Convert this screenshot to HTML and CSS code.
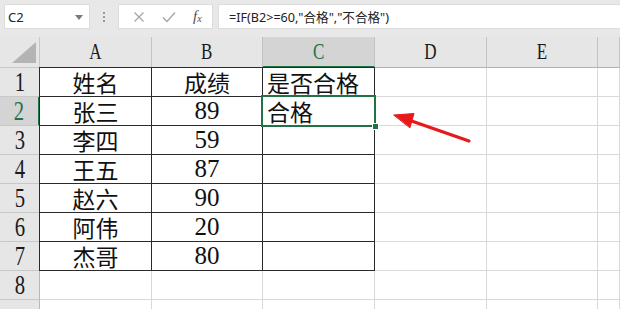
FILE: index.html
```html
<!DOCTYPE html>
<html lang="zh">
<head>
<meta charset="utf-8">
<title>Excel</title>
<link rel="stylesheet" href="styles.css">
</head>
<body>
<div class="app">
  <div class="toolbar">
    <div class="namebox">
      <span class="ref">C2</span>
      <svg class="drop" width="8" height="5" viewBox="0 0 8 5"><path d="M0 0H8L4 5Z" fill="#7a7a7a"/></svg>
    </div>
    <div class="grip"><i></i><i></i><i></i></div>
    <div class="buttons">
      <svg class="btn" width="12" height="12" viewBox="0 0 12 12"><path d="M1.5 1.5L10.5 10.5M10.5 1.5L1.5 10.5" stroke="#a6a6a6" stroke-width="1.3" fill="none"/></svg>
      <svg class="btn" width="14" height="12" viewBox="0 0 14 12"><path d="M1 6.5L5 10.5L13 1.5" stroke="#a6a6a6" stroke-width="1.4" fill="none"/></svg>
      <span class="fx">f<sub>x</sub></span>
    </div>
    <div class="formula">=IF(B2&gt;=60,"合格","不合格")</div>
  </div>
  <div class="sheet">
    <div class="corner"><svg width="24" height="21" viewBox="0 0 24 21"><path d="M24 0V21H0Z" fill="#b4b4b4"/></svg></div>
    <div class="ch"><span class="sq">A</span></div>
    <div class="ch"><span class="sq">B</span></div>
    <div class="ch act"><span class="sq">C</span></div>
    <div class="ch"><span class="sq">D</span></div>
    <div class="ch"><span class="sq">E</span></div>
    <div class="ch"></div>

    <div class="rh"><span class="sq">1</span></div>
    <div class="c t a top cen">姓名</div>
    <div class="c t top cen">成绩</div>
    <div class="c t top">是否合格</div>
    <div class="c"></div><div class="c"></div><div class="c"></div>

    <div class="rh act"><span class="sq">2</span></div>
    <div class="c t a cen">张三</div>
    <div class="c t cen num">89</div>
    <div class="c t sel">合格<span class="handle"></span></div>
    <div class="c"></div><div class="c"></div><div class="c"></div>

    <div class="rh"><span class="sq">3</span></div>
    <div class="c t a cen">李四</div>
    <div class="c t cen num">59</div>
    <div class="c t"></div>
    <div class="c"></div><div class="c"></div><div class="c"></div>

    <div class="rh"><span class="sq">4</span></div>
    <div class="c t a cen">王五</div>
    <div class="c t cen num">87</div>
    <div class="c t"></div>
    <div class="c"></div><div class="c"></div><div class="c"></div>

    <div class="rh"><span class="sq">5</span></div>
    <div class="c t a cen">赵六</div>
    <div class="c t cen num">90</div>
    <div class="c t"></div>
    <div class="c"></div><div class="c"></div><div class="c"></div>

    <div class="rh"><span class="sq">6</span></div>
    <div class="c t a cen">阿伟</div>
    <div class="c t cen num">20</div>
    <div class="c t"></div>
    <div class="c"></div><div class="c"></div><div class="c"></div>

    <div class="rh"><span class="sq">7</span></div>
    <div class="c t a cen">杰哥</div>
    <div class="c t cen num">80</div>
    <div class="c t"></div>
    <div class="c"></div><div class="c"></div><div class="c"></div>

    <div class="rh"><span class="sq">8</span></div>
    <div class="c"></div><div class="c"></div><div class="c"></div>
    <div class="c"></div><div class="c"></div><div class="c"></div>

    <div class="rh"></div>
    <div class="c"></div><div class="c"></div><div class="c"></div>
    <div class="c"></div><div class="c"></div><div class="c"></div>

    <svg class="arrow" width="90" height="40" viewBox="0 0 90 40">
      <g fill="#e8191a" stroke="#e8191a" stroke-linecap="round">
        <path d="M83 37L17 14" stroke-width="3.2" fill="none"/>
        <path d="M8 11L28 9.5L24 23.5Z" stroke-width="1"/>
      </g>
    </svg>
  </div>
</div>
</body>
</html>
```

FILE: styles.css
```css
* { box-sizing: border-box; }
html, body { margin: 0; padding: 0; }
body {
  width: 620px;
  height: 309px;
  overflow: hidden;
  background: #fff;
  font-family: "Liberation Serif", "Noto Sans CJK SC", serif;
}
.app { display: flex; flex-direction: column; height: 309px; }

.toolbar {
  height: 37px;
  flex: none;
  display: flex;
  align-items: flex-start;
  padding: 4px 0 0 4px;
  background: #e8e8e8;
  font-family: "Noto Sans", "Noto Sans CJK SC", sans-serif;
}
.namebox {
  width: 86px;
  height: 25px;
  background: #fff;
  border: 1px solid #dcdcdc;
  display: flex;
  align-items: center;
  justify-content: space-between;
  padding: 0 6px 0 3px;
  font-size: 13px;
  color: #222;
}
.drop { margin-top: 1px; }
.grip {
  width: 28px;
  height: 25px;
  display: flex;
  flex-direction: column;
  align-items: center;
  justify-content: center;
  gap: 2px;
}
.grip i { width: 2px; height: 2px; background: #9a9a9a; display: block; }
.buttons {
  width: 95px;
  height: 25px;
  background: #fff;
  border: 1px solid #dcdcdc;
  display: flex;
  align-items: center;
  justify-content: space-around;
  padding: 0 2px 0 6px;
}
.fx {
  font-family: "Liberation Serif", serif;
  font-style: italic;
  font-size: 15px;
  color: #505050;
  line-height: 1;
}
.fx sub { font-size: 10px; vertical-align: -1px; }
.formula {
  flex: 1;
  margin-left: 5px;
  height: 25px;
  background: #fff;
  border: 1px solid #dcdcdc;
  border-right: none;
  display: flex;
  align-items: center;
  padding-left: 10px;
  font-size: 12.6px;
  color: #222;
  white-space: nowrap;
}

.sheet {
  position: relative;
  flex: 1;
  display: grid;
  grid-template-columns: 40px 112px 111px 112px 112px 111px 1fr;
  grid-template-rows: 31px repeat(9, 29px);
  overflow: hidden;
}
.corner {
  background: #e6e6e6;
  border-right: 1px solid #c8c8c8;
  border-bottom: 1px solid #c8c8c8;
  display: flex;
  align-items: flex-end;
  justify-content: flex-end;
  padding: 0 3px 4px 0;
}
.ch {
  background: #e6e6e6;
  border-right: 1px solid #c3c3c3;
  border-bottom: 1px solid #b0b0b0;
  display: flex;
  align-items: center;
  justify-content: center;
  font-size: 23px;
  color: #1a1a1a;
  padding-top: 1px;
}
.ch.act {
  background: #d4d4d4;
  color: #217346;
  border-bottom: 2px solid #217346;
}
.rh {
  background: #e6e6e6;
  border-right: 1px solid #b8b8b8;
  border-bottom: 1px solid #c8c8c8;
  display: flex;
  align-items: center;
  justify-content: center;
  font-size: 28px;
  color: #1a1a1a;
}
.rh.act {
  background: #d4d4d4;
  color: #217346;
  border-right: 2px solid #217346;
}
.sq { display: inline-block; transform: scaleX(0.74); line-height: 0.9; }

.c {
  border-right: 1px solid #d9d9d9;
  border-bottom: 1px solid #d9d9d9;
  display: flex;
  align-items: flex-end;
  padding: 0 0 1px 4px;
  font-family: "Noto Sans CJK SC", sans-serif;
  font-size: 23px;
  line-height: 26px;
  color: #111;
  white-space: nowrap;
}
.c.t {
  border-right-color: #2a2a2a;
  border-bottom-color: #2a2a2a;
}
.c.a { box-shadow: -1px 0 0 #2a2a2a; }
.c.top { box-shadow: 0 -1px 0 #2a2a2a; }
.c.a.top { box-shadow: -1px 0 0 #2a2a2a, 0 -1px 0 #2a2a2a, -1px -1px 0 #2a2a2a; }
.c.cen { justify-content: center; padding-left: 0; }
.c.num {
  font-family: "Liberation Serif", serif;
  font-size: 25px;
  line-height: 26px;
}
.c.sel { position: relative; }
.c.sel::after {
  content: "";
  position: absolute;
  top: -2px;
  left: -2px;
  right: -2px;
  bottom: -2px;
  border: 2px solid #217346;
}
.handle {
  position: absolute;
  right: -5px;
  bottom: -5px;
  width: 7px;
  height: 7px;
  background: #217346;
  border: 1px solid #fff;
  z-index: 2;
}

.arrow {
  position: absolute;
  left: 386px;
  top: 67px;
}
```
